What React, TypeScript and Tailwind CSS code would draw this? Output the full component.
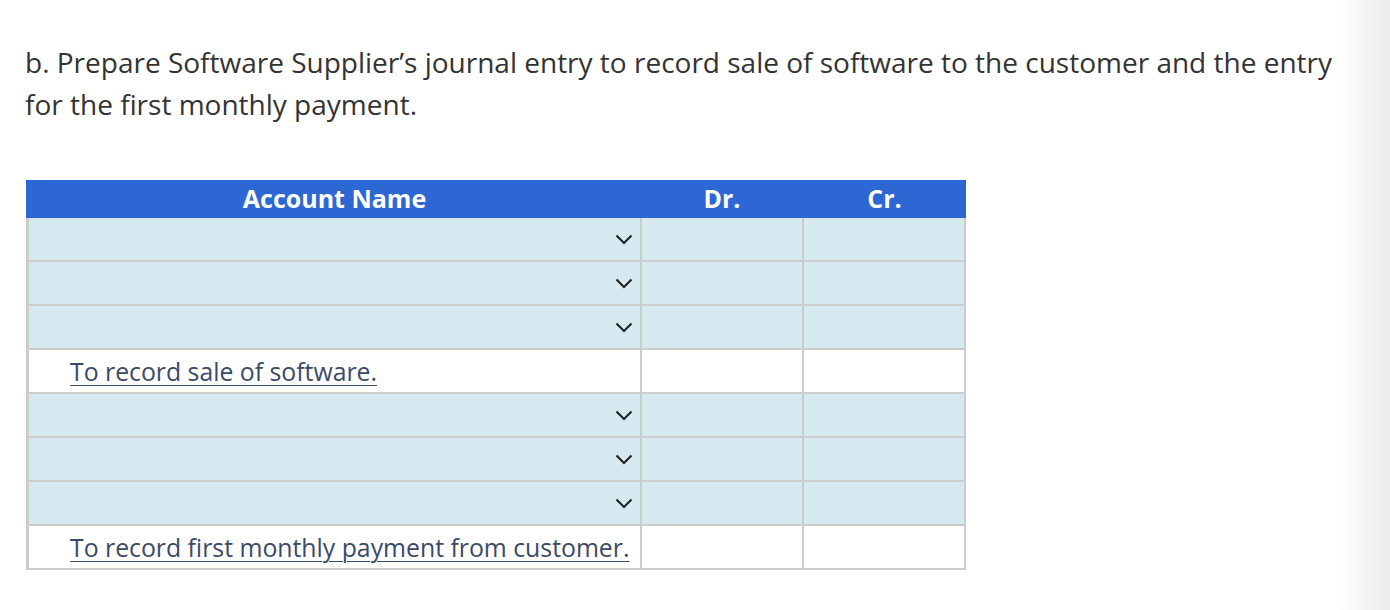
import React from 'react';

type Row = { kind: 'select' } | { kind: 'note'; text: string };

const rows: Row[] = [
  { kind: 'select' },
  { kind: 'select' },
  { kind: 'select' },
  { kind: 'note', text: 'To record sale of software.' },
  { kind: 'select' },
  { kind: 'select' },
  { kind: 'select' },
  { kind: 'note', text: 'To record first monthly payment from customer.' },
];

const Chevron: React.FC = () => (
  <svg width="18" height="11" viewBox="0 0 18 11" fill="none" className="text-[#1f1f1f]">
    <path d="M1.5 1.5 L9 9 L16.5 1.5" stroke="currentColor" strokeWidth="2" />
  </svg>
);

const App: React.FC = () => {
  return (
    <div className="flex w-[1390px] h-[610px] bg-white overflow-hidden font-['Open_Sans',sans-serif]">
      <div className="flex-1 pl-[25px] pt-[41px]">
        <p className="text-[28px] leading-[42px] text-[#333] whitespace-nowrap">
          b. Prepare Software Supplier’s journal entry to record sale of software to the customer and the entry
          <br />
          for the first monthly payment.
        </p>

        <div className="mt-[55px] ml-px w-[940px]">
          {/* header */}
          <div className="grid grid-cols-[615px_162px_163px] h-[38px] bg-[#2d67d3] text-white font-bold text-[25px] items-center">
            <div className="text-center pl-[2px]">Account Name</div>
            <div className="text-center">Dr.</div>
            <div className="text-center">Cr.</div>
          </div>

          {rows.map((row, i) => {
            const bg = row.kind === 'select' ? 'bg-[#d7e9f0]' : 'bg-white';
            return (
              <div key={i} className="grid grid-cols-[616px_162px_162px] h-[44px]">
                <div
                  className={`${bg} border-l-[3px] border-r-2 border-b-2 border-[#cccccc] flex items-center ${
                    row.kind === 'select' ? 'justify-end pr-[7px]' : 'pl-[41px]'
                  }`}
                >
                  {row.kind === 'select' ? (
                    <Chevron />
                  ) : (
                    <span className="text-[24.8px] text-[#3b4a68] underline underline-offset-[4px] decoration-1 leading-none pt-[1px] whitespace-nowrap">
                      {row.text}
                    </span>
                  )}
                </div>
                <div className={`${bg} border-r-2 border-b-2 border-[#cccccc]`} />
                <div className={`${bg} border-r-2 border-b-2 border-[#cccccc]`} />
              </div>
            );
          })}
        </div>
      </div>
      <div className="w-[52px] h-full bg-gradient-to-r from-white to-[#ebebeb]" />
    </div>
  );
};

export default App;
